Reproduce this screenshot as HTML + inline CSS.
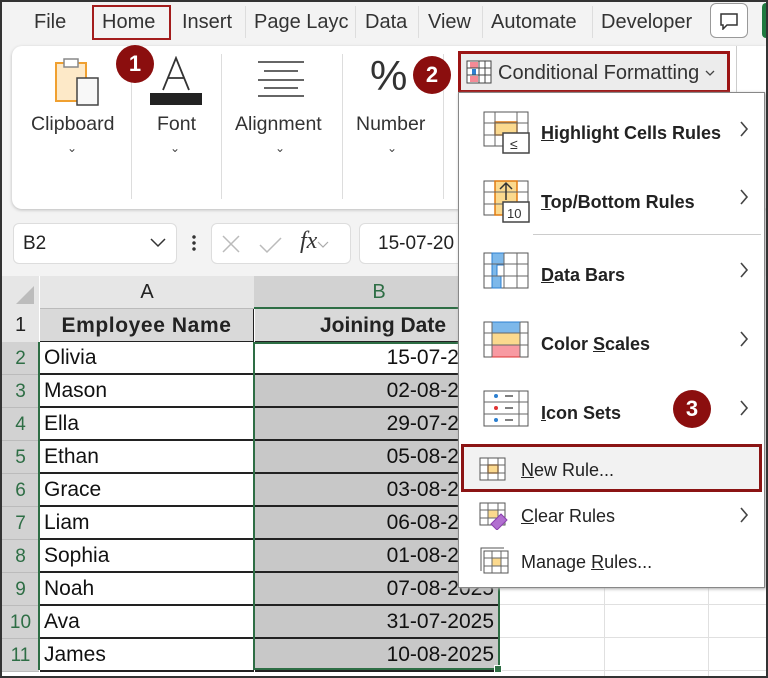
<!DOCTYPE html>
<html><head><meta charset="utf-8"><style>
*{margin:0;padding:0;box-sizing:border-box}
body{width:768px;height:678px;overflow:hidden;background:#f3f3f3;font-family:"Liberation Sans","DejaVu Sans",sans-serif;position:relative;color:#222}
.a{position:absolute}
.tab{position:absolute;top:11px;font-size:20px;color:#333}
.sep{position:absolute;top:6px;width:1px;height:32px;background:#ddd}
.grp{position:absolute;top:113px;font-size:19.5px;color:#333;text-align:center}
.chev{position:absolute;font-size:12px;color:#444}
.badge{position:absolute;width:38px;height:38px;border-radius:50%;background:#8b0e0e;color:#fff;font-weight:bold;font-size:22px;text-align:center;line-height:38px}
.rh{position:absolute;left:2px;width:37px;height:33px;background:#d2d2d2;color:#2e6e45;font-size:19px;text-align:center;line-height:33px;border-bottom:1px solid #bbb}
.ca{position:absolute;left:40px;width:214px;height:33px;background:#fff;border-bottom:2px solid #222;border-right:1px solid #222;font-size:21px;line-height:32px;padding-left:4px;color:#111}
.cb{position:absolute;left:255px;width:243px;height:33px;background:#c8c8c8;border-bottom:2px solid #222;font-size:21px;line-height:32px;text-align:right;padding-right:4px;color:#111;overflow:hidden}
.mi{position:absolute;left:541px;font-size:18px;font-weight:bold;color:#222}
.mi2{position:absolute;left:521px;font-size:18px;color:#222}
.arr{position:absolute;left:739px}
.gl{position:absolute;background:#e0e0e0}
</style></head><body>
<div class="a" style="left:0;top:0;width:768px;height:678px;border:2px solid #333;z-index:20;pointer-events:none"></div>
<div class="tab" style="left:34px">File</div>
<div class="a" style="left:92px;top:5px;width:79px;height:35px;border:2px solid #a31c1c"></div>
<div class="tab" style="left:102px">Home</div>
<div class="tab" style="left:182px">Insert</div><div class="sep" style="left:245px"></div>
<div class="tab" style="left:254px">Page Layc</div><div class="sep" style="left:355px"></div>
<div class="tab" style="left:365px">Data</div><div class="sep" style="left:418px"></div>
<div class="tab" style="left:428px">View</div><div class="sep" style="left:482px"></div>
<div class="tab" style="left:491px">Automate</div><div class="sep" style="left:592px"></div>
<div class="a" style="left:601px;top:11px;width:96px;overflow:hidden;white-space:nowrap;font-size:20px;color:#333">Developer</div>
<div class="a" style="left:710px;top:3px;width:38px;height:35px;border:1px solid #999;border-radius:6px;background:#fff"></div>
<svg class="a" style="left:719px;top:12px" width="20" height="18"><path d="M2 2h16v11H8l-4 4v-4H2z" fill="none" stroke="#333" stroke-width="1.5"/></svg>
<div class="a" style="left:762px;top:3px;width:6px;height:35px;background:#1f7a3f;border-radius:4px 0 0 4px"></div>
<div class="a" style="left:12px;top:46px;width:760px;height:163px;background:#fff;border-radius:10px;box-shadow:0 1px 3px #bbb"></div>
<div class="a" style="left:131px;top:54px;width:1px;height:145px;background:#ddd"></div>
<div class="a" style="left:221px;top:54px;width:1px;height:145px;background:#ddd"></div>
<div class="a" style="left:342px;top:54px;width:1px;height:145px;background:#ddd"></div>
<div class="a" style="left:443px;top:54px;width:1px;height:145px;background:#ddd"></div>
<svg class="a" style="left:52px;top:56px" width="52" height="52"><rect x="4" y="7" width="30" height="38" fill="#fde9c8" stroke="#f0a030" stroke-width="2"/><rect x="12" y="3" width="14" height="8" fill="#fff" stroke="#888" stroke-width="1.5"/><rect x="25" y="22" width="21" height="27" fill="#f8f8f8" stroke="#444" stroke-width="1.5"/></svg>
<div class="grp" style="left:31px">Clipboard</div><div class="chev" style="left:67px;top:141px">⌄</div>
<svg class="a" style="left:148px;top:56px" width="56" height="50"><path d="M15 34L28 2L41 34M20 22h16" fill="none" stroke="#333" stroke-width="1.8"/><rect x="2" y="37" width="52" height="12" fill="#222"/></svg>
<div class="grp" style="left:157px">Font</div><div class="chev" style="left:170px;top:141px">⌄</div>
<svg class="a" style="left:256px;top:60px" width="50" height="38"><path d="M2 2h46M8 11h34M2 20h46M8 28h34M2 36h46" stroke="#333" stroke-width="1.5"/></svg>
<div class="grp" style="left:235px">Alignment</div><div class="chev" style="left:275px;top:141px">⌄</div>
<div class="a" style="left:370px;top:52px;font-size:42px;color:#333">%</div>
<div class="grp" style="left:356px">Number</div><div class="chev" style="left:387px;top:141px">⌄</div>
<div class="badge" style="left:116px;top:45px">1</div>
<div class="badge" style="left:413px;top:56px">2</div>
<div class="a" style="left:458px;top:51px;width:272px;height:42px;background:#ececec;border:3px solid #9c1414"></div>
<svg class="a" style="left:466px;top:60px" width="26" height="24"><rect x="1" y="1" width="24" height="22" fill="#fff" stroke="#444"/><rect x="4" y="2" width="8" height="6" fill="#f48a96"/><rect x="4" y="16" width="8" height="6" fill="#f48a96"/><rect x="6" y="9" width="4" height="6" fill="#2c7fd0"/><path d="M1 8h24M1 15h24M13 1v22M19 1v22" stroke="#444"/></svg>
<div class="a" style="left:498px;top:62px;font-size:20px;color:#333;white-space:nowrap">Conditional Formatting</div>
<svg class="a" style="left:705px;top:70px" width="10" height="6"><path d="M1 1l4 4 4-4" fill="none" stroke="#444" stroke-width="1.3"/></svg>
<div class="a" style="left:736px;top:46px;width:32px;height:46px;background:#fff;border-left:1px solid #ccc"></div>
<div class="a" style="left:13px;top:223px;width:164px;height:41px;background:#fff;border:1px solid #ddd;border-radius:6px"></div>
<div class="a" style="left:23px;top:233px;font-size:19px;color:#222">B2</div>
<svg class="a" style="left:150px;top:238px" width="16" height="10"><path d="M1 1l7 7 7-7" fill="none" stroke="#333" stroke-width="1.5"/></svg>
<div class="a" style="left:192px;top:234px;width:4px;height:18px;background:radial-gradient(circle,#333 1.5px,transparent 2px) 0 0/4px 6px"></div>
<div class="a" style="left:211px;top:223px;width:140px;height:41px;background:#fff;border:1px solid #ddd;border-radius:6px"></div>
<svg class="a" style="left:220px;top:233px" width="110" height="22"><path d="M3 3l16 16M19 3L3 19" stroke="#bbb" stroke-width="1.5"/><path d="M40 12l7 7 14-14" fill="none" stroke="#bbb" stroke-width="1.5"/><path d="M98 9l5 5 5-5" fill="none" stroke="#aaa" stroke-width="1.2"/></svg>
<div class="a" style="left:300px;top:228px;font-size:24px;font-style:italic;font-family:'Liberation Serif',serif;color:#333">fx</div>
<div class="a" style="left:359px;top:223px;width:120px;height:41px;background:#fff;border:1px solid #ddd;border-radius:6px 0 0 6px"></div>
<div class="a" style="left:378px;top:233px;font-size:19px;color:#222">15-07-20</div>
<div class="a" style="left:2px;top:276px;width:766px;height:400px;background:#fff"></div>
<div class="a" style="left:2px;top:276px;width:37px;height:33px;background:#e6e6e6"></div>
<svg class="a" style="left:14px;top:284px" width="22" height="22"><path d="M20 2v18H2z" fill="#bcbcbc"/></svg>
<div class="a" style="left:40px;top:276px;width:214px;height:33px;background:#e6e6e6;border-bottom:1px solid #bbb;text-align:center;font-size:20px;line-height:33px">A</div>
<div class="a" style="left:254px;top:276px;width:250px;height:33px;background:#d2d2d2;border-bottom:2px solid #2e6e45;text-align:center;font-size:20px;line-height:33px;color:#2e6e45">B</div>
<div class="a" style="left:2px;top:309px;width:37px;height:33px;background:#e6e6e6;text-align:center;font-size:20px;line-height:33px">1</div>
<div class="a" style="left:40px;top:309px;width:214px;height:33px;background:#d9d9d9;border-right:1px solid #222;border-bottom:1px solid #222;text-align:center;font-size:21px;font-weight:bold;line-height:34px;letter-spacing:0.6px">Employee Name</div>
<div class="a" style="left:255px;top:309px;width:243px;height:33px;background:#d9d9d9;border-bottom:1px solid #222;text-align:right;padding-right:52px;font-size:21px;font-weight:bold;line-height:34px;overflow:hidden;white-space:nowrap">Joining Date</div>
<div class="gl" style="left:604px;top:587px;width:1px;height:90px"></div>
<div class="gl" style="left:708px;top:587px;width:1px;height:90px"></div>
<div class="gl" style="left:500px;top:604px;width:268px;height:1px"></div>
<div class="gl" style="left:500px;top:637px;width:268px;height:1px"></div>
<div class="gl" style="left:500px;top:670px;width:268px;height:1px"></div>
<div class="rh" style="top:342px">2</div><div class="ca" style="top:342px">Olivia</div><div class="cb" style="top:342px;background:#fff">15-07-2025</div>
<div class="rh" style="top:375px">3</div><div class="ca" style="top:375px">Mason</div><div class="cb" style="top:375px">02-08-2025</div>
<div class="rh" style="top:408px">4</div><div class="ca" style="top:408px">Ella</div><div class="cb" style="top:408px">29-07-2025</div>
<div class="rh" style="top:441px">5</div><div class="ca" style="top:441px">Ethan</div><div class="cb" style="top:441px">05-08-2025</div>
<div class="rh" style="top:474px">6</div><div class="ca" style="top:474px">Grace</div><div class="cb" style="top:474px">03-08-2025</div>
<div class="rh" style="top:507px">7</div><div class="ca" style="top:507px">Liam</div><div class="cb" style="top:507px">06-08-2025</div>
<div class="rh" style="top:540px">8</div><div class="ca" style="top:540px">Sophia</div><div class="cb" style="top:540px">01-08-2025</div>
<div class="rh" style="top:573px">9</div><div class="ca" style="top:573px">Noah</div><div class="cb" style="top:573px">07-08-2025</div>
<div class="rh" style="top:606px">10</div><div class="ca" style="top:606px">Ava</div><div class="cb" style="top:606px">31-07-2025</div>
<div class="rh" style="top:639px">11</div><div class="ca" style="top:639px">James</div><div class="cb" style="top:639px">10-08-2025</div>
<div class="a" style="left:38px;top:342px;width:2px;height:328px;background:#2e6e45"></div>
<div class="a" style="left:253px;top:342px;width:247px;height:328px;border:2px solid #2e6e45"></div>
<div class="a" style="left:494px;top:665px;width:8px;height:8px;background:#2e6e45;border:1px solid #fff"></div>
<div class="a" style="left:458px;top:92px;width:307px;height:496px;background:#fff;border:1px solid #888;box-shadow:1px 1px 3px #aaa"></div>
<svg class="a" style="left:483px;top:111px" width="48" height="44"><rect x="1" y="1" width="44" height="34" fill="#fff" stroke="#555"/><rect x="12" y="11" width="22" height="13" fill="#fbd98e" stroke="#e07a10" stroke-width="1.5"/><path d="M1 12h44M1 24h44M12 1v34M34 1v34" stroke="#666"/><rect x="20" y="22" width="26" height="20" fill="#fff" stroke="#444" stroke-width="1.5"/><text x="27" y="38" font-size="14" font-family="Liberation Sans" fill="#333">≤</text></svg>
<div class="mi" style="top:123px"><u>H</u>ighlight Cells Rules</div>
<svg class="arr" style="top:121px" width="10" height="16"><path d="M2 1l6 7-6 7" fill="none" stroke="#444" stroke-width="1.6"/></svg>
<svg class="a" style="left:483px;top:180px" width="48" height="44"><rect x="1" y="1" width="44" height="34" fill="#fff" stroke="#555"/><rect x="12" y="1" width="22" height="34" fill="#fbd98e" stroke="#e07a10" stroke-width="1.5"/><path d="M1 12h44M1 24h44" stroke="#666"/><path d="M23 20V3M17 9l6-6 6 6" fill="none" stroke="#333" stroke-width="1.5"/><rect x="20" y="22" width="26" height="20" fill="#fff" stroke="#444" stroke-width="1.5"/><text x="24" y="38" font-size="13" font-family="Liberation Sans" fill="#333">10</text></svg>
<div class="mi" style="top:192px"><u>T</u>op/Bottom Rules</div>
<svg class="arr" style="top:189px" width="10" height="16"><path d="M2 1l6 7-6 7" fill="none" stroke="#444" stroke-width="1.6"/></svg>
<div class="a" style="left:533px;top:234px;width:228px;height:1px;background:#ccc"></div>
<svg class="a" style="left:483px;top:252px" width="48" height="40"><rect x="1" y="1" width="44" height="35" fill="#fff" stroke="#555"/><rect x="9" y="1" width="12" height="12" fill="#7db8ea" stroke="#2c7fd0"/><rect x="9" y="12" width="5" height="12" fill="#7db8ea" stroke="#2c7fd0"/><rect x="9" y="24" width="9" height="12" fill="#7db8ea" stroke="#2c7fd0"/><path d="M1 12h44M1 24h44M21 1v35M34 1v35" stroke="#666"/></svg>
<div class="mi" style="top:265px"><u>D</u>ata Bars</div>
<svg class="arr" style="top:262px" width="10" height="16"><path d="M2 1l6 7-6 7" fill="none" stroke="#444" stroke-width="1.6"/></svg>
<svg class="a" style="left:483px;top:321px" width="48" height="40"><rect x="1" y="1" width="44" height="35" fill="#fff" stroke="#555"/><rect x="9" y="1" width="28" height="11" fill="#7db8ea" stroke="#2c7fd0"/><rect x="9" y="12" width="28" height="12" fill="#fbd98e"/><rect x="9" y="24" width="28" height="12" fill="#f89aa2" stroke="#d33"/><path d="M1 12h44M1 24h44M9 1v35M37 1v35" stroke="#666"/></svg>
<div class="mi" style="top:334px">Color <u>S</u>cales</div>
<svg class="arr" style="top:331px" width="10" height="16"><path d="M2 1l6 7-6 7" fill="none" stroke="#444" stroke-width="1.6"/></svg>
<svg class="a" style="left:483px;top:390px" width="48" height="40"><rect x="1" y="1" width="44" height="35" fill="#fff" stroke="#555"/><path d="M1 12h44M1 24h44M36 1v35" stroke="#666"/><circle cx="13" cy="6" r="2" fill="#2c7fd0"/><circle cx="13" cy="18" r="2" fill="#e03333"/><circle cx="13" cy="30" r="2" fill="#2c7fd0"/><path d="M22 6h8M22 18h8M22 30h8" stroke="#555" stroke-width="1.5"/></svg>
<div class="mi" style="top:403px"><u>I</u>con Sets</div>
<svg class="arr" style="top:400px" width="10" height="16"><path d="M2 1l6 7-6 7" fill="none" stroke="#444" stroke-width="1.6"/></svg>
<div class="badge" style="left:673px;top:390px">3</div>
<div class="a" style="left:461px;top:444px;width:301px;height:48px;background:#f2f2f2;border:3px solid #8b1414"></div>
<svg class="a" style="left:479px;top:457px" width="28" height="24"><rect x="1" y="1" width="25" height="22" fill="#fff" stroke="#555"/><rect x="9" y="8" width="10" height="8" fill="#fbd98e" stroke="#e07a10" stroke-width="1.5"/><path d="M1 8h25M1 16h25M9 1v22M19 1v22" stroke="#666"/></svg>
<div class="mi2" style="top:460px"><u>N</u>ew Rule...</div>
<svg class="a" style="left:479px;top:502px" width="30" height="28"><rect x="1" y="1" width="25" height="22" fill="#fff" stroke="#555"/><rect x="9" y="8" width="10" height="8" fill="#fbd98e" stroke="#e07a10"/><path d="M1 8h25M1 16h25M9 1v22M19 1v22" stroke="#666"/><path d="M12 22l10-10 6 6-10 10z" fill="#b16fd0" stroke="#8a3fae"/></svg>
<div class="mi2" style="top:506px"><u>C</u>lear Rules</div>
<svg class="arr" style="top:507px" width="10" height="16"><path d="M2 1l6 7-6 7" fill="none" stroke="#444" stroke-width="1.6"/></svg>
<svg class="a" style="left:480px;top:547px" width="30" height="28"><path d="M1 24V1h23" fill="none" stroke="#555"/><rect x="4" y="4" width="24" height="22" fill="#fff" stroke="#555"/><rect x="12" y="11" width="9" height="8" fill="#fbd98e" stroke="#e07a10"/><path d="M4 11h24M4 19h24M12 4v22M21 4v22" stroke="#666"/></svg>
<div class="mi2" style="top:552px">Manage <u>R</u>ules...</div>
</body></html>
